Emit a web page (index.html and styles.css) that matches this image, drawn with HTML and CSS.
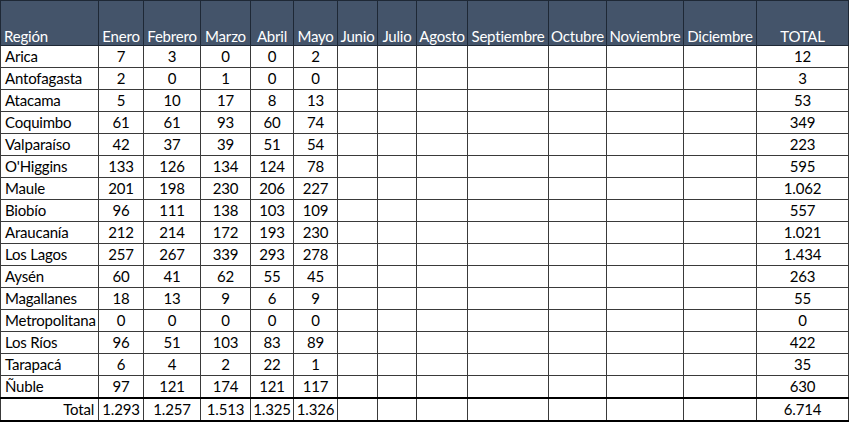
FILE: index.html
```html
<!DOCTYPE html>
<html lang="es">
<head>
<meta charset="utf-8">
<link rel="stylesheet" href="styles.css">
</head>
<body>
<table class="grid">
<colgroup>
<col class="c-reg"><col class="c-ene"><col class="c-feb"><col class="c-mar"><col class="c-abr"><col class="c-may"><col class="c-jun"><col class="c-jul"><col class="c-ago"><col class="c-sep"><col class="c-oct"><col class="c-nov"><col class="c-dic"><col class="c-tot">
</colgroup>
<thead>
<tr><th class="left">Región</th><th>Enero</th><th>Febrero</th><th>Marzo</th><th>Abril</th><th>Mayo</th><th>Junio</th><th>Julio</th><th>Agosto</th><th>Septiembre</th><th>Octubre</th><th>Noviembre</th><th>Diciembre</th><th class="tot">TOTAL</th></tr>
</thead>
<tbody>
<tr><td class="left">Arica</td><td>7</td><td>3</td><td>0</td><td>0</td><td>2</td><td></td><td></td><td></td><td></td><td></td><td></td><td></td><td>12</td></tr>
<tr><td class="left">Antofagasta</td><td>2</td><td>0</td><td>1</td><td>0</td><td>0</td><td></td><td></td><td></td><td></td><td></td><td></td><td></td><td>3</td></tr>
<tr><td class="left">Atacama</td><td>5</td><td>10</td><td>17</td><td>8</td><td>13</td><td></td><td></td><td></td><td></td><td></td><td></td><td></td><td>53</td></tr>
<tr><td class="left">Coquimbo</td><td>61</td><td>61</td><td>93</td><td>60</td><td>74</td><td></td><td></td><td></td><td></td><td></td><td></td><td></td><td>349</td></tr>
<tr><td class="left">Valparaíso</td><td>42</td><td>37</td><td>39</td><td>51</td><td>54</td><td></td><td></td><td></td><td></td><td></td><td></td><td></td><td>223</td></tr>
<tr><td class="left">O'Higgins</td><td>133</td><td>126</td><td>134</td><td>124</td><td>78</td><td></td><td></td><td></td><td></td><td></td><td></td><td></td><td>595</td></tr>
<tr><td class="left">Maule</td><td>201</td><td>198</td><td>230</td><td>206</td><td>227</td><td></td><td></td><td></td><td></td><td></td><td></td><td></td><td>1.062</td></tr>
<tr><td class="left">Biobío</td><td>96</td><td>111</td><td>138</td><td>103</td><td>109</td><td></td><td></td><td></td><td></td><td></td><td></td><td></td><td>557</td></tr>
<tr><td class="left">Araucanía</td><td>212</td><td>214</td><td>172</td><td>193</td><td>230</td><td></td><td></td><td></td><td></td><td></td><td></td><td></td><td>1.021</td></tr>
<tr><td class="left">Los Lagos</td><td>257</td><td>267</td><td>339</td><td>293</td><td>278</td><td></td><td></td><td></td><td></td><td></td><td></td><td></td><td>1.434</td></tr>
<tr><td class="left">Aysén</td><td>60</td><td>41</td><td>62</td><td>55</td><td>45</td><td></td><td></td><td></td><td></td><td></td><td></td><td></td><td>263</td></tr>
<tr><td class="left">Magallanes</td><td>18</td><td>13</td><td>9</td><td>6</td><td>9</td><td></td><td></td><td></td><td></td><td></td><td></td><td></td><td>55</td></tr>
<tr><td class="left">Metropolitana</td><td>0</td><td>0</td><td>0</td><td>0</td><td>0</td><td></td><td></td><td></td><td></td><td></td><td></td><td></td><td>0</td></tr>
<tr><td class="left">Los Ríos</td><td>96</td><td>51</td><td>103</td><td>83</td><td>89</td><td></td><td></td><td></td><td></td><td></td><td></td><td></td><td>422</td></tr>
<tr><td class="left">Tarapacá</td><td>6</td><td>4</td><td>2</td><td>22</td><td>1</td><td></td><td></td><td></td><td></td><td></td><td></td><td></td><td>35</td></tr>
<tr><td class="left">Ñuble</td><td>97</td><td>121</td><td>174</td><td>121</td><td>117</td><td></td><td></td><td></td><td></td><td></td><td></td><td></td><td>630</td></tr>
</tbody>
<tfoot>
<tr><td class="right">Total</td><td>1.293</td><td>1.257</td><td>1.513</td><td>1.325</td><td>1.326</td><td></td><td></td><td></td><td></td><td></td><td></td><td></td><td>6.714</td></tr>
</tfoot>
</table>
</body>
</html>
```
FILE: styles.css
```css
html, body {
  margin: 0;
  padding: 0;
  background: #ffffff;
}
.grid {
  border-collapse: collapse;
  table-layout: fixed;
  width: 849px;
  font-family: Lato, "Open Sans", sans-serif;
  font-size: 15px;
  letter-spacing: -0.2px;
  color: #000;
}
.c-reg { width: 98px; }
.c-ene { width: 45px; }
.c-feb { width: 57px; }
.c-mar { width: 50px; }
.c-abr { width: 43px; }
.c-may { width: 44px; }
.c-jun { width: 40px; }
.c-jul { width: 39px; }
.c-ago { width: 51px; }
.c-sep { width: 81px; }
.c-oct { width: 58px; }
.c-nov { width: 77px; }
.c-dic { width: 73px; }
.c-tot { width: 92px; }
.grid th {
  background: #44546a;
  color: #ffffff;
  font-weight: normal;
  height: 44px;
  vertical-align: bottom;
  padding: 0;
  border: 1px solid #1e2835;
  white-space: nowrap;
  text-align: center;
  line-height: 18px;
}
.grid th.left { text-align: left; padding-left: 3px; }
.grid td {
  height: 21px;
  padding: 0;
  border: 1px solid #3a3a3a;
  text-align: center;
  line-height: 21px;
  white-space: nowrap;
}
.grid td.left { text-align: left; padding-left: 4px; }
.grid td.right { text-align: right; padding-right: 4px; }
.grid tbody tr:first-child td { border-top: 1px solid #1e2835; }
.grid tfoot td {
  border-top: 2px solid #000;
  border-bottom: 2px solid #000;
  height: 20px;
}
```
